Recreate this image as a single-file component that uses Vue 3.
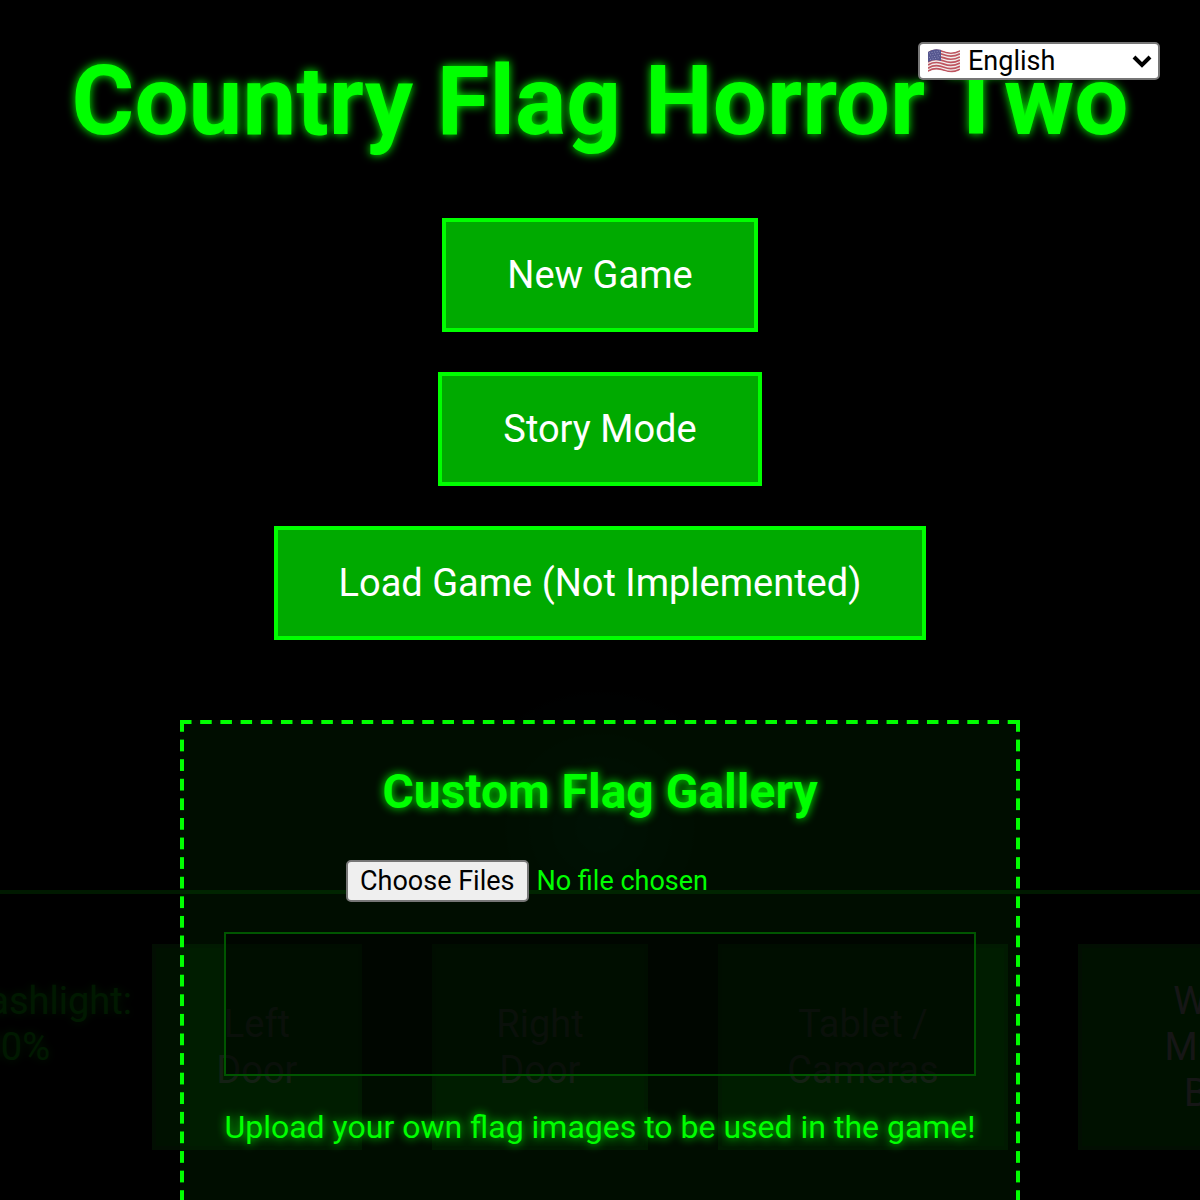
<script setup>
import { ref } from 'vue'

const language = ref('en')
const menuItems = ['New Game', 'Story Mode', 'Load Game (Not Implemented)']
const controls = [
  { lines: ['Left', 'Door'], size: 'left' },
  { lines: ['Right', 'Door'], size: 'right' },
  { lines: ['Tablet /', 'Cameras'], size: 'tablet' },
  { lines: ['Wind', 'Music', 'Box'], size: 'music' },
]
</script>

<template>
  <div class="game">
    <section class="hud">
      <p class="status">Flashlight:<br />100%</p>
      <div class="controls">
        <button v-for="c in controls" :key="c.size" type="button" class="control" :class="c.size">
          <span v-for="line in c.lines" :key="line">{{ line }}</span>
        </button>
      </div>
    </section>

    <main class="menu">
      <h1>Country Flag Horror Two</h1>
      <nav class="actions">
        <button v-for="item in menuItems" :key="item" type="button" class="action">{{ item }}</button>
      </nav>
      <section class="gallery">
        <h2>Custom Flag Gallery</h2>
        <input type="file" multiple accept="image/*" aria-label="Custom flag images" />
        <div class="preview"></div>
        <p>Upload your own flag images to be used in the game!</p>
      </section>
    </main>

    <div class="language">
      <select v-model="language" aria-label="Language">
        <option value="en">English</option>
      </select>
      <svg class="flag" viewBox="0 0 32 24" aria-hidden="true">
        <defs>
          <clipPath id="wave">
            <path d="M0 3C6 -1 11 0 16 2S26 4 32 1V21C26 25 21 23 16 22S6 20 0 23Z" />
          </clipPath>
        </defs>
        <g clip-path="url(#wave)">
          <rect width="32" height="24" fill="#f1ecec" />
          <g fill="none" stroke="#bf5560" stroke-width="1.7">
            <path
              v-for="n in 7"
              :key="n"
              :d="`M0 ${n * 3.1 + 0.6}C6 ${n * 3.1 - 3.4} 11 ${n * 3.1 - 2.4} 16 ${n * 3.1 - 0.4}S26 ${n * 3.1 + 1.6} 32 ${n * 3.1 - 1.4}`"
            />
          </g>
          <path d="M0 0H13V12C8 10 4 11 0 13Z" fill="#55568f" />
          <g stroke="#8f91bb" stroke-width="1" stroke-dasharray="1 1.6">
            <path d="M1 4L12 2M2 6L12 4M1 8.500L12 6.500M2 10.500L12 8.500" />
          </g>
        </g>
      </svg>
      <svg class="chevron" viewBox="0 0 20 14" aria-hidden="true">
        <path d="M2 3L10 11L18 3" fill="none" stroke="#000" stroke-width="4" />
      </svg>
    </div>
  </div>
</template>

<style>
body {
  margin: 0;
  background: #000;
}
</style>

<style scoped>
.game {
  position: relative;
  display: grid;
  grid-template: 100vh / minmax(0, 1fr);
  overflow: hidden;
  background: radial-gradient(circle at 50% 69%, #063c3c, #021010 10%, #000 18%);
  color: #0f0;
  font-family: Roboto, "Liberation Sans", sans-serif;
}
h1,
h2,
p {
  margin: 0;
}
button {
  font-family: inherit;
}
.hud {
  grid-area: 1 / 1;
  align-self: end;
  display: flex;
  justify-content: center;
  gap: 20px;
  padding: 50px 0 50px 112px;
  border-top: 4px solid #0f0;
  background: rgba(0, 0, 0, 0.8);
  font-size: 38px;
  line-height: 46px;
}
.status {
  flex: none;
  padding-top: 34px;
  text-shadow: 0 0 10px #0f0;
}
.controls {
  flex: none;
  display: flex;
  gap: 70px;
}
.control {
  display: flex;
  flex-direction: column;
  justify-content: center;
  align-items: center;
  min-height: 206px;
  padding: 30px 60px;
  border: 4px solid #1c8a1c;
  background: #0a0;
  color: #ddd;
  font-size: 38px;
  line-height: 46px;
}
.left {
  width: 210px;
}
.right {
  width: 216px;
}
.tablet {
  width: 290px;
  white-space: nowrap;
}
.music {
  width: 276px;
}
.menu {
  grid-area: 1 / 1;
  z-index: 1;
  display: flex;
  flex-direction: column;
  align-items: center;
  min-height: 0;
  padding-top: 44px;
  overflow: hidden;
  background: rgba(0, 0, 0, 0.9);
  text-align: center;
  text-shadow: 0 0 10px #0f0;
}
h1 {
  font-size: 96px;
  line-height: 114px;
  white-space: nowrap;
}
.actions {
  display: flex;
  flex-direction: column;
  align-items: center;
  gap: 40px;
  margin: 60px 0 80px;
}
.action {
  padding: 30px 61px;
  border: 4px solid #0f0;
  background: #0a0;
  color: #fff;
  font-size: 38px;
  line-height: 46px;
}
.gallery {
  --dash-x: linear-gradient(90deg, #0f0 12px, transparent 12px);
  --dash-y: linear-gradient(#0f0 12px, transparent 12px);
  flex: none;
  display: flex;
  flex-direction: column;
  align-items: center;
  padding: 40px 40px 72px;
  border: 4px solid transparent;
  background-color: rgba(0, 255, 0, 0.05);
  background-image: var(--dash-x), var(--dash-x), var(--dash-y), var(--dash-y);
  background-origin: border-box;
  background-position: left top, left bottom, left top, right top;
  background-repeat: repeat-x, repeat-x, repeat-y, repeat-y;
  background-size:
    calc((100% - 12px) / 41) 4px,
    calc((100% - 12px) / 41) 4px,
    4px calc((100% - 12px) / 25),
    4px calc((100% - 12px) / 25);
}
h2 {
  margin-bottom: 40px;
  font-size: 48px;
  line-height: 56px;
}
input[type="file"] {
  width: 508px;
  height: 42px;
  margin-bottom: 30px;
  color: #0f0;
  font-family: inherit;
  font-size: 27px;
  line-height: 34px;
  text-shadow: none;
}
input::file-selector-button {
  height: 42px;
  margin: 0 8px 0 0;
  padding: 2px 12px;
  border: 2px solid #767676;
  border-radius: 5px;
  background: #efefef;
  color: #000;
  font-family: inherit;
  font-size: 27px;
  line-height: 34px;
}
.preview {
  align-self: stretch;
  height: 140px;
  margin-bottom: 32px;
  border: 2px solid #050;
  background: rgba(0, 0, 0, 0.5);
}
.gallery p {
  font-size: 32px;
  line-height: 38px;
}
.language {
  position: absolute;
  z-index: 2;
  top: 42px;
  right: 40px;
}
select {
  display: block;
  width: 242px;
  height: 38px;
  padding: 0 40px 0 48px;
  appearance: none;
  border: 2px solid #767676;
  border-radius: 5px;
  background: #fff;
  color: #000;
  font-family: inherit;
  font-size: 27px;
}
.flag {
  position: absolute;
  top: 7px;
  left: 10px;
  width: 32px;
  height: 24px;
  pointer-events: none;
}
.chevron {
  position: absolute;
  top: 12px;
  right: 8px;
  width: 20px;
  height: 14px;
  pointer-events: none;
}
</style>
